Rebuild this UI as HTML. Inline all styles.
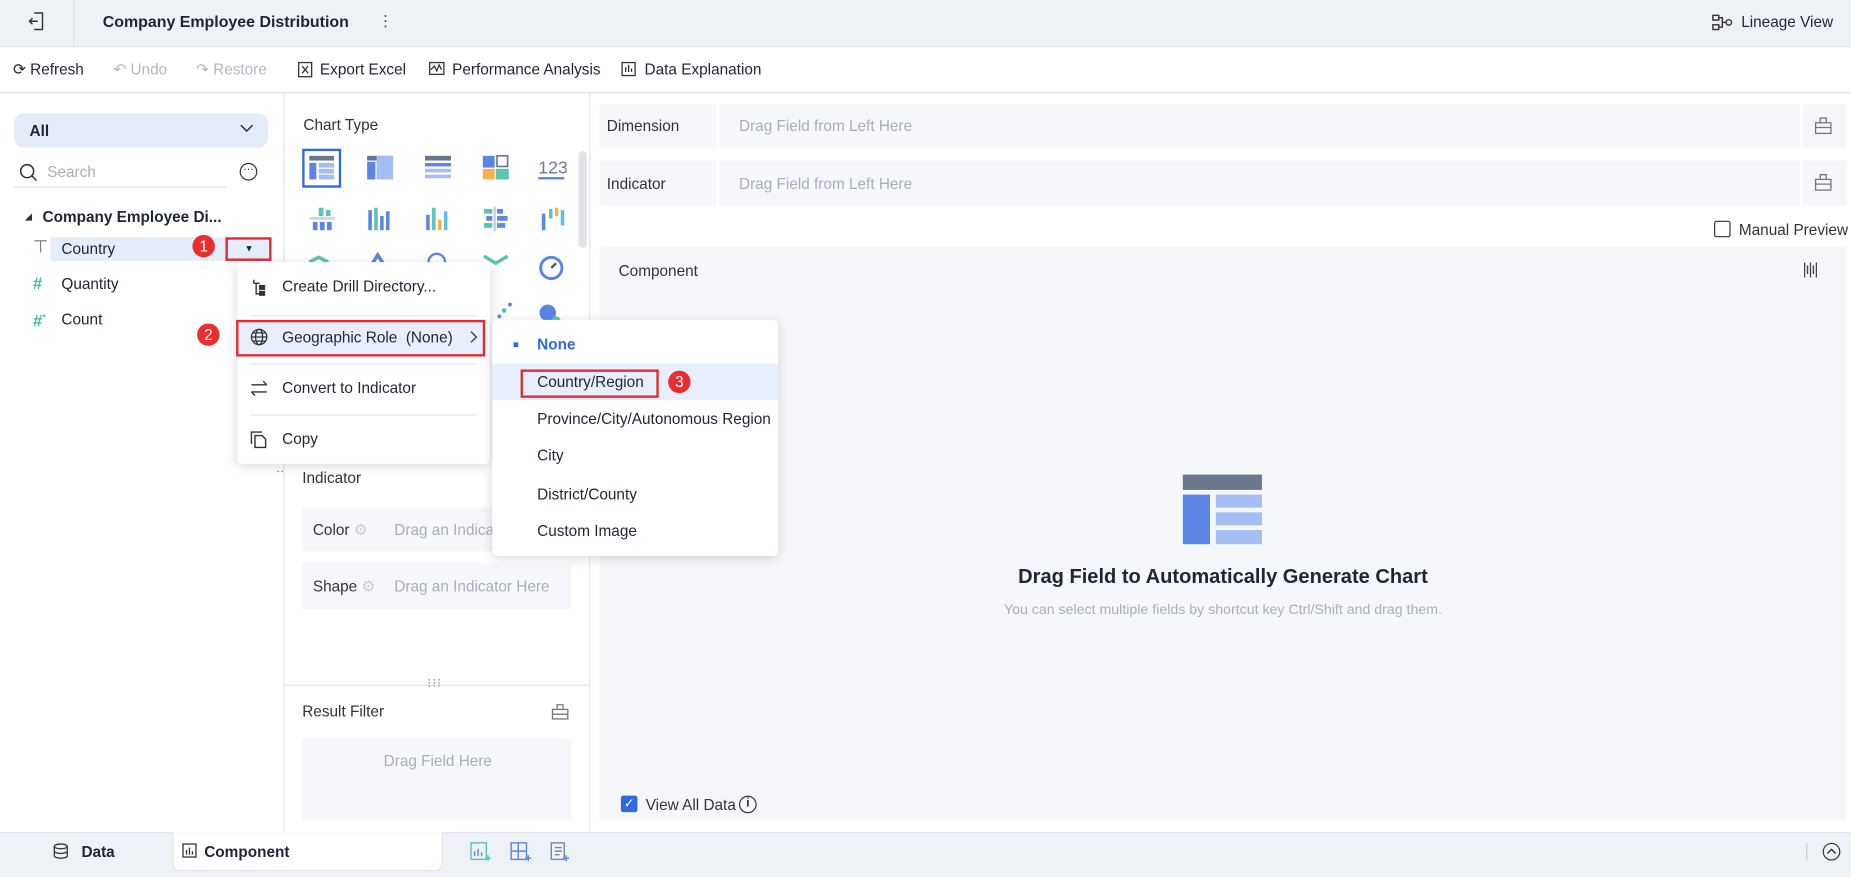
<!DOCTYPE html>
<html><head><meta charset="utf-8"><style>
*{box-sizing:border-box;margin:0;padding:0}
html,body{width:1851px;height:877px;overflow:hidden;background:#fff}
#w{position:absolute;left:0;top:0;width:1568px;height:743px;transform:scale(1.18048);transform-origin:0 0;font-family:"Liberation Sans",Arial,sans-serif;font-size:13px;color:#1f2633}
.a{position:absolute}
.t{position:absolute;white-space:nowrap;line-height:16px}
.g{color:#a9afb9}
.badge{position:absolute;width:19px;height:19px;border-radius:50%;background:#ec2d2d;color:#fff;font-size:13px;text-align:center;line-height:19px}
.red{position:absolute;border:2px solid #e8282c}
.sep{position:absolute;height:1px;background:#e3e6eb}
.box{position:absolute;background:#f5f7fb}
</style></head><body><div id="w">
<!-- top bar -->
<div class="a" style="left:0;top:0;width:1568px;height:40px;background:#eef1f6;border-bottom:1px solid #e1e4ea"></div>
<div class="a" style="left:62px;top:0;width:1px;height:40px;background:#dde1e7"></div>
<svg class="a" style="left:24px;top:10px" width="14" height="16" viewBox="0 0 14 16" fill="none" stroke="#333" stroke-width="1.2"><path d="M5 1h7v14H5M8 8H1M3.5 5.5L1 8l2.5 2.5"/></svg>
<div class="t" style="left:87px;top:11px;font-weight:bold;font-size:13.5px">Company Employee Distribution</div>
<div class="t" style="left:320px;top:10px;color:#555">⋮</div>
<svg class="a" style="left:1450px;top:12px" width="18" height="14" viewBox="0 0 18 14" fill="none" stroke="#333" stroke-width="1.2"><rect x="1" y="1" width="5" height="4"/><rect x="1" y="9" width="5" height="4"/><path d="M6 3h3v8H6M9 7h3"/><circle cx="14.5" cy="7" r="2.3"/></svg>
<div class="t" style="left:1475px;top:11px">Lineage View</div>
<!-- toolbar -->
<div class="a" style="left:0;top:78px;width:1568px;height:1px;background:#e1e4ea"></div>
<div class="t" style="left:11px;top:51px">⟳ Refresh</div>
<div class="t g" style="left:96px;top:51px;color:#b3b8c1">↶ Undo</div>
<div class="t g" style="left:166px;top:51px;color:#b3b8c1">↷ Restore</div>
<svg class="a" style="left:252px;top:52px" width="13" height="14" viewBox="0 0 13 14" fill="none" stroke="#333" stroke-width="1.1"><rect x="1" y="1" width="11" height="12"/><path d="M4 4l5 6M9 4l-5 6"/></svg>
<div class="t" style="left:271px;top:51px">Export Excel</div>
<svg class="a" style="left:363px;top:52px" width="14" height="13" viewBox="0 0 14 13" fill="none" stroke="#333" stroke-width="1.1"><rect x="1" y="1" width="12" height="10"/><path d="M2 7l3-3 2 4 2-5 2 4"/></svg>
<div class="t" style="left:383px;top:51px">Performance Analysis</div>
<svg class="a" style="left:526px;top:52px" width="13" height="14" viewBox="0 0 13 14" fill="none" stroke="#333" stroke-width="1.1"><rect x="1" y="1" width="11" height="11"/><path d="M4 9V5M6.5 9V3M9 9V6"/></svg>
<div class="t" style="left:546px;top:51px">Data Explanation</div>
<!-- left panel -->
<div class="a" style="left:240px;top:79px;width:1px;height:626px;background:#e3e6eb"></div>
<div class="a" style="left:12px;top:96px;width:215px;height:29px;background:#e4ecfa;border-radius:8px"></div>
<div class="t" style="left:25px;top:103px;font-weight:bold">All</div>
<svg class="a" style="left:203px;top:105px" width="12" height="8" viewBox="0 0 12 8" fill="none" stroke="#333" stroke-width="1.3"><path d="M1 1l5 5 5-5"/></svg>
<svg class="a" style="left:16px;top:138px" width="16" height="16" viewBox="0 0 16 16" fill="none" stroke="#333" stroke-width="1.3"><circle cx="7" cy="7" r="5.5"/><path d="M11 11l4 4"/></svg>
<div class="t g" style="left:40px;top:138px">Search</div>
<div class="a" style="left:12px;top:158px;width:180px;height:1px;background:#dcdfe5"></div>
<div class="a" style="left:203px;top:138px;width:15px;height:15px;border:1.2px solid #333;border-radius:50%;font-size:9px;line-height:9px;text-align:center">···</div>
<div class="t" style="left:21px;top:176px;font-size:8px;color:#333">◢</div>
<div class="t" style="left:36px;top:176px;font-weight:bold">Company Employee Di...</div>
<div class="a" style="left:43px;top:201px;width:187px;height:20px;background:#e5edfb"></div>
<div class="t" style="left:28px;top:202px;color:#6c7586;font-size:15px">⊤</div>
<div class="t" style="left:52px;top:203px">Country</div>
<div class="badge" style="left:163px;top:199px">1</div>
<div class="red" style="left:191px;top:201px;width:39px;height:20px"></div>
<div class="t" style="left:207px;top:203px;font-size:8px">▼</div>
<div class="t" style="left:28px;top:232px;color:#3dbba6;font-weight:bold;font-size:14px">#</div>
<div class="t" style="left:52px;top:233px">Quantity</div>
<div class="t" style="left:28px;top:262px;color:#3dbba6;font-weight:bold;font-size:14px">#<sup style="font-size:7px">*</sup></div>
<div class="t" style="left:52px;top:263px">Count</div>
<!-- middle panel -->
<div class="a" style="left:499px;top:79px;width:1px;height:626px;background:#e3e6eb"></div>
<div class="t" style="left:257px;top:98px;color:#333">Chart Type</div>
<div class="a" style="left:256px;top:126px;width:33px;height:33px;border:2px solid #2f6ae0"></div>
<svg class="a" style="left:260px;top:130px" width="220" height="150" viewBox="0 0 220 150">
<g><rect x="2" y="2" width="21" height="4" fill="#6b778c"/><rect x="2" y="8" width="6" height="14" fill="#5b86e5"/><rect x="10" y="8" width="13" height="4" fill="#a4bdf3"/><rect x="10" y="13" width="13" height="4" fill="#a4bdf3"/><rect x="10" y="18" width="13" height="4" fill="#a4bdf3"/></g>
<g transform="translate(49,0)"><rect x="2" y="2" width="22" height="4" fill="#6b778c"/><rect x="2" y="7" width="7" height="15" fill="#5b86e5"/><rect x="10" y="2" width="14" height="20" fill="#a4bdf3"/></g>
<g transform="translate(98,0)"><rect x="2" y="2" width="22" height="4" fill="#6b778c"/><rect x="2" y="8" width="22" height="3" fill="#5b86e5"/><rect x="2" y="13" width="22" height="3" fill="#a4bdf3"/><rect x="2" y="18" width="22" height="3" fill="#a4bdf3"/></g>
<g transform="translate(147,0)"><rect x="2" y="2" width="10" height="10" fill="#5b86e5"/><rect x="14" y="2" width="9" height="9" fill="none" stroke="#6b778c" stroke-width="1.4"/><rect x="2" y="13" width="10" height="9" fill="#f7b24a"/><rect x="13" y="13" width="11" height="9" fill="#5ec4b2"/></g>
<text x="196" y="17" font-family="Liberation Sans" font-size="15" fill="#6b778c">123</text><rect x="196" y="20" width="22" height="2" fill="#5b86e5"/>
<g transform="translate(0,44)"><rect x="2" y="10" width="22" height="2" fill="#c8d0dc"/><rect x="10" y="2" width="4" height="7" fill="#5ec4b2"/><rect x="16" y="4" width="4" height="5" fill="#5ec4b2"/><rect x="5" y="14" width="4" height="7" fill="#5b86e5"/><rect x="11" y="14" width="4" height="7" fill="#5b86e5"/><rect x="17" y="14" width="4" height="7" fill="#5b86e5"/>
<g transform="translate(49,0)"><rect x="3" y="4" width="3" height="17" fill="#5b86e5"/><rect x="8" y="2" width="3" height="19" fill="#5ec4b2"/><rect x="13" y="9" width="3" height="12" fill="#5b86e5"/><rect x="18" y="5" width="3" height="16" fill="#5b86e5"/></g>
<g transform="translate(98,0)"><rect x="3" y="8" width="3" height="13" fill="#5b86e5"/><rect x="8" y="2" width="3" height="19" fill="#5ec4b2"/><rect x="13" y="12" width="3" height="9" fill="#f7b24a"/><rect x="18" y="5" width="3" height="16" fill="#5bc0f0"/></g>
<g transform="translate(147,0)"><rect x="11" y="1" width="2" height="21" fill="#c8d0dc"/><rect x="3" y="3" width="7" height="4" fill="#5ec4b2"/><rect x="14" y="3" width="5" height="4" fill="#5b86e5"/><rect x="5" y="9" width="5" height="4" fill="#5b86e5"/><rect x="14" y="9" width="9" height="4" fill="#5b86e5"/><rect x="3" y="15" width="7" height="4" fill="#5ec4b2"/><rect x="14" y="15" width="7" height="4" fill="#5b86e5"/></g>
<g transform="translate(196,0)"><rect x="3" y="7" width="3" height="14" fill="#5b86e5"/><rect x="9" y="3" width="3" height="8" fill="#5ec4b2"/><rect x="14" y="2" width="3" height="7" fill="#f7b24a"/><rect x="19" y="4" width="3" height="13" fill="#5bc0f0"/></g></g>
<g transform="translate(196,86)"><circle cx="11" cy="11" r="9" fill="none" stroke="#5b86e5" stroke-width="2.5"/><path d="M11 11l4-4" stroke="#555" stroke-width="2"/></g>
<path d="M2 92l8-4 8 4" stroke="#5ec4b2" stroke-width="3" fill="none"/><path d="M55 94l5-8 5 8" stroke="#5b86e5" stroke-width="3" fill="none"/><circle cx="110" cy="92" r="7" fill="none" stroke="#5b86e5" stroke-width="2"/><path d="M150 87l10 6 10-6" stroke="#5ec4b2" stroke-width="3" fill="none"/>
<circle cx="167" cy="133" r="2" fill="#5ec4b2"/><circle cx="172" cy="128" r="1.6" fill="#5b86e5"/><circle cx="163" cy="138" r="1.6" fill="#5b86e5"/>
<circle cx="204" cy="135" r="7" fill="#5b86e5"/><circle cx="211" cy="142" r="4" fill="#5ec4b2"/>
</svg>
<div class="t" style="left:234px;top:392px;color:#666;font-size:10px">··</div>
<div class="a" style="left:490px;top:128px;width:7px;height:82px;background:#dfe2e7;border-radius:4px"></div>
<div class="t" style="left:256px;top:397px;color:#333">Indicator</div>
<div class="box" style="left:256px;top:430px;width:228px;height:37px"></div>
<div class="t" style="left:265px;top:441px;color:#333">Color <span style="color:#ccd">⚙</span></div>
<div class="t g" style="left:334px;top:441px">Drag an Indicator Here</div>
<div class="box" style="left:256px;top:477px;width:228px;height:39px"></div>
<div class="t" style="left:265px;top:489px;color:#333">Shape <span style="color:#ccd">⚙</span></div>
<div class="t g" style="left:334px;top:489px">Drag an Indicator Here</div>
<div class="a" style="left:241px;top:580px;width:258px;height:1px;background:#e3e6eb"></div>
<div class="t" style="left:362px;top:572px;color:#888;font-size:10px;letter-spacing:1px">⁝⁝⁝</div>
<div class="t" style="left:256px;top:595px;color:#333">Result Filter</div>
<svg class="a" style="left:467px;top:596px" width="15" height="14" viewBox="0 0 15 14" fill="none" stroke="#777" stroke-width="1.1"><rect x="1" y="5" width="13" height="8"/><path d="M5 5V1h5v4M1 9h13"/></svg>
<div class="box" style="left:256px;top:626px;width:228px;height:69px"></div>
<div class="t g" style="left:325px;top:637px">Drag Field Here</div>
<!-- right -->
<div class="box" style="left:508px;top:88px;width:1056px;height:38px"></div>
<div class="a" style="left:607px;top:88px;width:2px;height:38px;background:#fff"></div>
<div class="a" style="left:1525px;top:88px;width:2px;height:38px;background:#fff"></div>
<div class="t" style="left:514px;top:99px;color:#333">Dimension</div>
<div class="t g" style="left:626px;top:99px">Drag Field from Left Here</div>
<div class="box" style="left:508px;top:136px;width:1056px;height:38px"></div>
<div class="a" style="left:607px;top:136px;width:2px;height:38px;background:#fff"></div>
<div class="a" style="left:1525px;top:136px;width:2px;height:38px;background:#fff"></div>
<div class="t" style="left:514px;top:148px;color:#333">Indicator</div>
<div class="t g" style="left:626px;top:148px">Drag Field from Left Here</div>
<svg class="a" style="left:1537px;top:99px" width="15" height="15" viewBox="0 0 15 15" fill="none" stroke="#777" stroke-width="1.1"><rect x="1" y="5" width="13" height="9"/><path d="M5 5V1h5v4M1 9h13"/></svg>
<svg class="a" style="left:1537px;top:147px" width="15" height="15" viewBox="0 0 15 15" fill="none" stroke="#777" stroke-width="1.1"><rect x="1" y="5" width="13" height="9"/><path d="M5 5V1h5v4M1 9h13"/></svg>
<div class="a" style="left:1452px;top:187px;width:14px;height:14px;border:1.2px solid #333;border-radius:2px"></div>
<div class="t" style="left:1473px;top:187px;color:#333">Manual Preview</div>
<div class="box" style="left:508px;top:209px;width:1056px;height:486px"></div>
<div class="t" style="left:524px;top:222px;color:#333">Component</div>
<div class="t" style="left:1527px;top:220px;color:#444;font-size:13px;letter-spacing:-1px">|ı|ı|</div>
<div class="a" style="left:1002px;top:402px;width:67px;height:13px;background:#6b778c"></div>
<div class="a" style="left:1002px;top:419px;width:23px;height:42px;background:#5b86e5"></div>
<div class="a" style="left:1030px;top:419px;width:39px;height:11px;background:#a4bdf3"></div>
<div class="a" style="left:1030px;top:434px;width:39px;height:11px;background:#a4bdf3"></div>
<div class="a" style="left:1030px;top:449px;width:39px;height:12px;background:#a4bdf3"></div>
<div class="t" style="left:836px;top:479px;width:400px;text-align:center;font-weight:bold;font-size:17px;line-height:20px">Drag Field to Automatically Generate Chart</div>
<div class="t g" style="left:786px;top:508px;width:500px;text-align:center;font-size:12px">You can select multiple fields by shortcut key Ctrl/Shift and drag them.</div>
<div class="a" style="left:526px;top:674px;width:14px;height:14px;background:#2f6ae0;border-radius:2px;color:#fff;font-size:11px;line-height:14px;text-align:center">✓</div>
<div class="t" style="left:547px;top:674px;color:#333">View All Data</div>
<div class="a" style="left:626px;top:674px;width:15px;height:15px;border:1.3px solid #333;border-radius:50%;font-size:10px;line-height:12px;text-align:center;font-weight:bold">i</div>
<!-- bottom bar -->
<div class="a" style="left:0;top:705px;width:1568px;height:38px;background:#eef1f6;border-top:1px solid #dde1e7"></div>
<svg class="a" style="left:45px;top:714px" width="13" height="14" viewBox="0 0 13 14" fill="none" stroke="#333" stroke-width="1.1"><ellipse cx="6.5" cy="3" rx="5.5" ry="2"/><path d="M1 3v8c0 1.1 2.5 2 5.5 2s5.5-.9 5.5-2V3M1 7c0 1.1 2.5 2 5.5 2S12 8.1 12 7"/></svg>
<div class="t" style="left:69px;top:714px;font-weight:bold">Data</div>
<div class="a" style="left:146px;top:705px;width:229px;height:33px;background:#fff;border-radius:0 0 6px 6px;border:1px solid #e1e4ea;border-top:none"></div>
<svg class="a" style="left:154px;top:714px" width="13" height="13" viewBox="0 0 13 13" fill="none" stroke="#333" stroke-width="1.1"><rect x="1" y="1" width="11" height="11"/><path d="M4 10V6M6.5 10V4M9 10V7"/></svg>
<div class="t" style="left:173px;top:714px;font-weight:bold">Component</div>
<svg class="a" style="left:398px;top:712px" width="90" height="20" viewBox="0 0 90 20" fill="none" stroke-width="1.2"><rect x="1" y="2" width="13" height="14" stroke="#5ec4b2"/><path d="M4 13V9M7 13V7M10 13V10" stroke="#5b86e5"/><path d="M13 15h5M15.5 12.5v5" stroke="#5ec4b2"/><rect x="35" y="2" width="13" height="14" stroke="#5b86e5"/><path d="M35 9h13M41 2v14" stroke="#5b86e5"/><path d="M47 15h5M49.5 12.5v5" stroke="#5b86e5"/><rect x="69" y="2" width="11" height="14" stroke="#7a8aa8"/><path d="M72 6h6M72 9h6M72 12h4" stroke="#7a8aa8"/><path d="M79 15h5M81.5 12.5v5" stroke="#5b86e5"/></svg>
<div class="a" style="left:1530px;top:714px;width:1px;height:15px;background:#ccc"></div>
<div class="a" style="left:1544px;top:714px;width:15px;height:15px;border:1.2px solid #333;border-radius:50%"></div>
<svg class="a" style="left:1547px;top:718px" width="9" height="6" viewBox="0 0 9 6" fill="none" stroke="#333" stroke-width="1.2"><path d="M1 5l3.5-3.5L8 5"/></svg>
<!-- context menu -->
<div class="a" style="left:201px;top:222px;width:214px;height:171px;background:#fff;border-radius:4px;box-shadow:0 2px 10px rgba(0,0,0,.15)"></div>
<svg class="a" style="left:213px;top:236px" width="13" height="15" viewBox="0 0 13 15" fill="none" stroke="#333" stroke-width="1.2"><path d="M2 1v3M2 4h5M4 4v9h3"/><rect x="7" y="6" width="4" height="3" fill="#333"/><rect x="7" y="11" width="4" height="3" fill="#333"/></svg>
<div class="t" style="left:239px;top:235px">Create Drill Directory...</div>
<div class="sep" style="left:212px;top:267px;width:191px"></div>
<div class="a" style="left:200px;top:271px;width:211px;height:30px;background:#e8effc"></div>
<div class="red" style="left:200px;top:271px;width:211px;height:31px"></div>
<svg class="a" style="left:212px;top:278px" width="15" height="15" viewBox="0 0 15 15" fill="none" stroke="#333" stroke-width="1.1"><circle cx="7.5" cy="7.5" r="6.5"/><ellipse cx="7.5" cy="7.5" rx="3" ry="6.5"/><path d="M1 7.5h13M2 4h11M2 11h11"/></svg>
<div class="t" style="left:239px;top:278px">Geographic Role&nbsp; (None)</div>
<svg class="a" style="left:398px;top:280px" width="7" height="11" viewBox="0 0 7 11" fill="none" stroke="#333" stroke-width="1.1"><path d="M1 1l4.5 4.5L1 10"/></svg>
<div class="badge" style="left:167px;top:274px">2</div>
<div class="sep" style="left:212px;top:308px;width:191px"></div>
<svg class="a" style="left:212px;top:322px" width="15" height="14" viewBox="0 0 15 14" fill="none" stroke="#333" stroke-width="1.2"><path d="M1 4h13M11 1l3 3M14 10H1M4 13l-3-3"/></svg>
<div class="t" style="left:239px;top:321px">Convert to Indicator</div>
<div class="sep" style="left:212px;top:351px;width:191px"></div>
<svg class="a" style="left:212px;top:365px" width="15" height="15" viewBox="0 0 15 15" fill="none" stroke="#333" stroke-width="1.2"><path d="M1 11V1h9"/><path d="M4 4h6l3 3v7H4z"/></svg>
<div class="t" style="left:239px;top:364px">Copy</div>
<!-- submenu -->
<div class="a" style="left:417px;top:271px;width:242px;height:200px;background:#fff;border-radius:4px;box-shadow:0 2px 10px rgba(0,0,0,.15)"></div>
<div class="a" style="left:435px;top:290px;width:4px;height:4px;background:#2f6ae0"></div>
<div class="t" style="left:455px;top:284px;color:#2f6ae0;font-weight:bold">None</div>
<div class="a" style="left:417px;top:308px;width:242px;height:31px;background:#e8effc"></div>
<div class="t" style="left:455px;top:316px">Country/Region</div>
<div class="red" style="left:441px;top:313px;width:117px;height:24px"></div>
<div class="badge" style="left:566px;top:314px">3</div>
<div class="t" style="left:455px;top:347px">Province/City/Autonomous Region</div>
<div class="t" style="left:455px;top:378px">City</div>
<div class="t" style="left:455px;top:411px">District/County</div>
<div class="t" style="left:455px;top:442px">Custom Image</div>
</div></body></html>
